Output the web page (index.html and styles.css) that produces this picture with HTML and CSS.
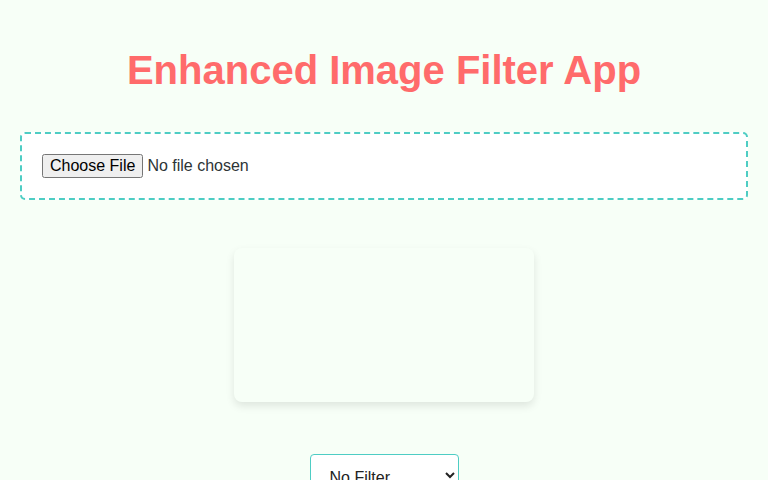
FILE: index.html
```html
<!DOCTYPE html>
<html>
  <head>
    <title>Enhanced Image Filter App</title>
    <link rel="stylesheet" href="styles.css">
  </head>

  <body>
    <h1>Enhanced Image Filter App</h1>

    <div class="upload-box">
      <input type="file" id="image-input" accept="image/*" />
    </div>

    <div class="preview">
      <div class="canvas"></div>
    </div>

    <div class="controls">
      <select id="filter-select">
        <option value="none">No Filter</option>
        <option value="grayscale">Grayscale</option>
        <option value="sepia">Sepia</option>
        <option value="invert">Invert</option>
        <option value="blur">Blur</option>
      </select>
    </div>
  </body>
</html>
```

FILE: styles.css
```css
body {
  margin: 0;
  padding: 20px;
  background-color: #f7fff7;
  font-family: 'Liberation Sans', Arial, sans-serif;
  color: #2d3436;
}

h1 {
  font-size: 40px;
  line-height: 46px;
  color: #ff6b6b;
  text-align: center;
  margin: 27px 0 39px;
}

.upload-box {
  border: 2px dashed #4ecdc4;
  border-radius: 5px;
  background-color: #fff;
  padding: 20px;
}

.upload-box input {
  font-family: 'Liberation Sans', Arial, sans-serif;
  font-size: 16px;
  color: #2d3436;
}

.preview {
  display: flex;
  justify-content: center;
  margin-top: 48px;
}

.canvas {
  width: 300px;
  height: 154px;
  border-radius: 8px;
  background-color: #f7fff7;
  box-shadow: 0 4px 8px rgba(0, 0, 0, 0.1);
}

.controls {
  display: flex;
  justify-content: center;
  margin-top: 52px;
}

select {
  width: 149px;
  padding: 13px 15px 9px;
  font-family: 'Liberation Sans', Arial, sans-serif;
  font-size: 16px;
  color: #222;
  background-color: #fff;
  border: 1px solid #4ecdc4;
  border-radius: 4px;
}
```
